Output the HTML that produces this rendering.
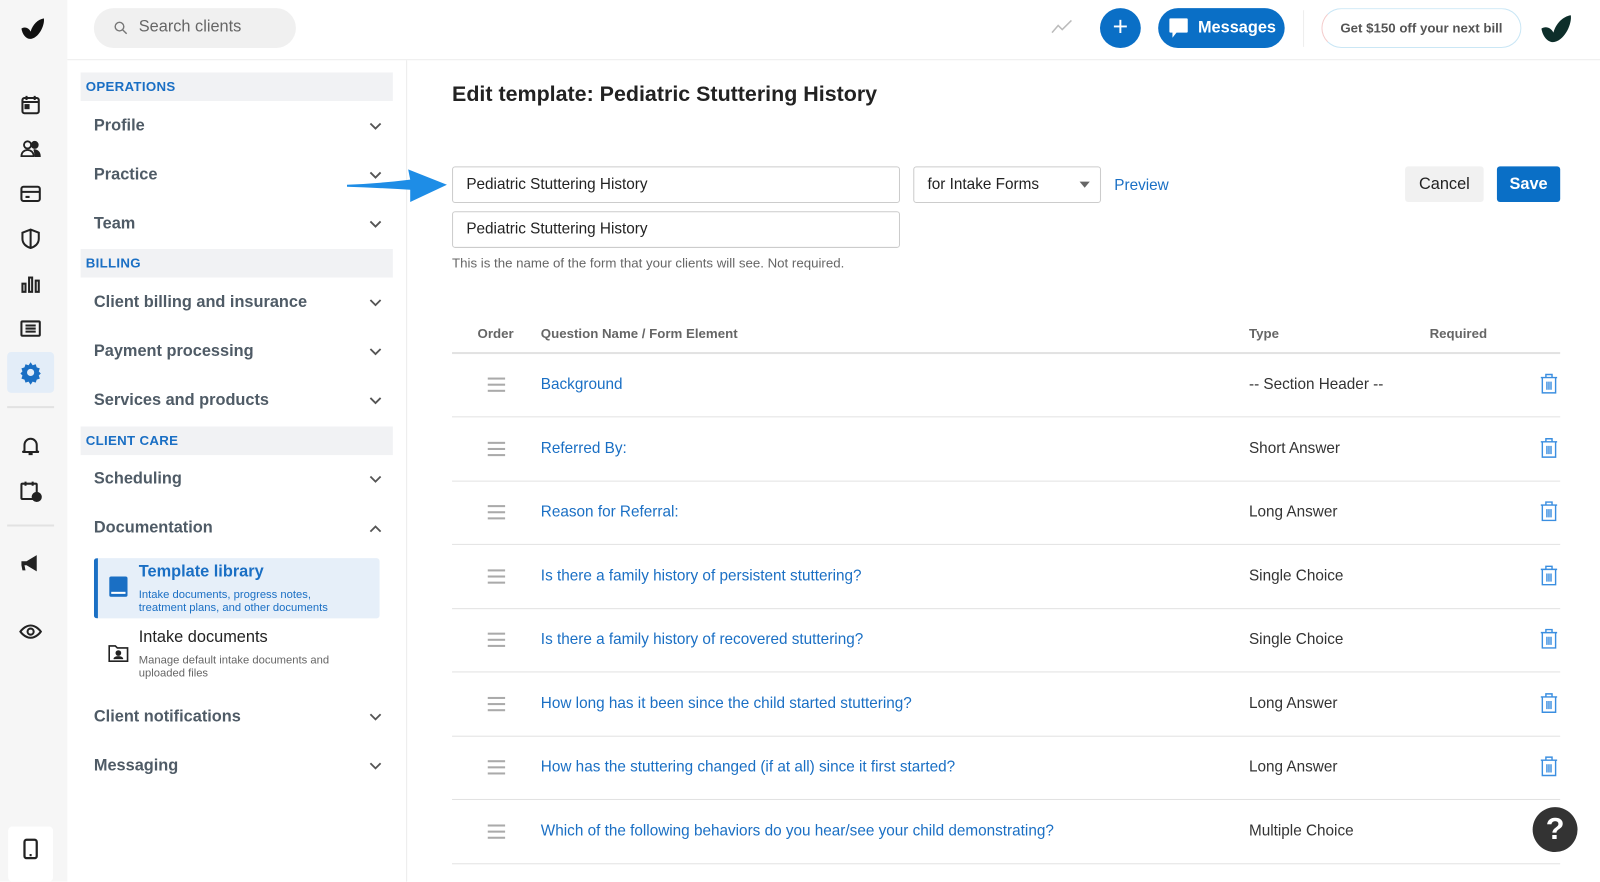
<!DOCTYPE html>
<html><head><meta charset="utf-8"><style>
*{box-sizing:border-box;margin:0;padding:0}
html,body{width:1600px;height:864px;overflow:hidden}
body{font-family:"Liberation Sans",sans-serif;background:#fff;color:#222}
#w{position:absolute;left:0;top:0;width:1568px;height:847px;transform:scale(1.0204);transform-origin:0 0}
.rail{position:absolute;left:0;top:0;width:66px;height:864px;background:#f6f6f6}
.ic{position:absolute;left:18px;width:24px;height:24px}
.top{position:absolute;left:66px;top:0;right:0;height:59px;border-bottom:1px solid #ececec}
.side{position:absolute;left:66px;top:59px;width:333px;height:805px;border-right:1px solid #ececec}
.sec{position:absolute;left:13px;width:306px;height:28px;background:#f1f2f4;color:#1a6fc4;font-weight:bold;font-size:13px;line-height:28px;padding-left:5px;letter-spacing:.3px}
.it{position:absolute;left:26px;width:283px;font-size:16px;font-weight:bold;color:#4f5b66}
.chev{position:absolute;right:0;top:2px;width:14px;height:14px}
.abs{position:absolute}
.row{position:absolute;left:443px;width:1086px;height:63px;border-bottom:1px solid #e2e2e2}
.row .q{position:absolute;left:87px;top:22px;font-size:15px;color:#1a6fc4}
.row .t{position:absolute;left:781px;top:22px;font-size:15px;color:#333}
.row .h{position:absolute;left:35px;top:24px;width:17px;height:14px;border-top:2px solid #aaa;border-bottom:2px solid #aaa}
.row .h:after{content:"";position:absolute;left:0;right:0;top:4px;border-top:2px solid #aaa}
.row svg{position:absolute;left:1066px;top:20px}
</style></head><body><div id="w">
<div class="rail">
<svg class="abs" style="left:19px;top:16px" width="26" height="24" viewBox="0 0 26 24"><path d="M2 12c3-2 7-1 9 3 2-7 7-12 13-13 1 6-4 18-12 20C7 23 3 18 2 12z" fill="#111"/></svg>
<svg class="ic" style="top:91px" viewBox="0 0 24 24" fill="none" stroke="#222" stroke-width="2"><rect x="4" y="5" width="16" height="15" rx="2"/><path d="M8 3v4M16 3v4M4 9h16"/><rect x="7" y="12" width="3" height="3" fill="#222"/></svg>
<svg class="ic" style="top:134px" viewBox="0 0 24 24" fill="none" stroke="#222" stroke-width="1.8"><circle cx="9" cy="8" r="3.5"/><path d="M3 19c0-4 3-6 6-6s6 2 6 6z"/><circle cx="16" cy="8" r="3" fill="#222"/><path d="M15 13c3 0 6 2 6 6h-5" fill="#222"/></svg>
<svg class="ic" style="top:178px" viewBox="0 0 24 24" fill="none" stroke="#222" stroke-width="2"><rect x="3" y="5" width="18" height="14" rx="2"/><path d="M3 10h18M7 15h4"/></svg>
<svg class="ic" style="top:222px" viewBox="0 0 24 24" fill="none" stroke="#222" stroke-width="2"><path d="M12 3l8 3v6c0 5-4 8-8 9-4-1-8-4-8-9V6z M12 3v18"/></svg>
<svg class="ic" style="top:266px" viewBox="0 0 24 24" fill="none" stroke="#222" stroke-width="2"><rect x="4" y="12" width="3" height="8"/><rect x="10.5" y="6" width="3" height="14"/><rect x="17" y="9" width="3" height="11"/></svg>
<svg class="ic" style="top:310px" viewBox="0 0 24 24" fill="none" stroke="#222" stroke-width="2"><rect x="3" y="5" width="18" height="14" rx="1"/><path d="M7 9h10M7 12h10M7 15h10"/></svg>
<div class="abs" style="left:7px;top:345px;width:46px;height:40px;background:#e3edf8;border-radius:4px"></div>
<svg class="ic" style="top:353px" viewBox="0 0 24 24"><path fill="#1a6fc4" d="M12 2l2 3 3-1 1 3 3 1-1 3 2 2-2 2 1 3-3 1-1 3-3-1-2 3-2-3-3 1-1-3-3-1 1-3-2-2 2-2-1-3 3-1 1-3 3 1z"/><circle cx="12" cy="12" r="3.5" fill="#e3edf8"/></svg>
<div class="abs" style="left:7px;top:398px;width:46px;border-top:2px solid #e2e2e2"></div>
<svg class="ic" style="top:425px" viewBox="0 0 24 24" fill="none" stroke="#222" stroke-width="2"><path d="M6 17V11a6 6 0 0112 0v6l2 1H4z M10 20h4"/></svg>
<svg class="ic" style="top:469px" viewBox="0 0 24 24" fill="none" stroke="#222" stroke-width="2"><rect x="3" y="5" width="15" height="15" rx="1"/><path d="M7 3v4M14 3v4"/><circle cx="18" cy="18" r="4" fill="#222"/></svg>
<div class="abs" style="left:7px;top:514px;width:46px;border-top:2px solid #e2e2e2"></div>
<svg class="ic" style="top:540px" viewBox="0 0 24 24"><path fill="#222" d="M3 10h5l10-6v16L8 14H6l1 5H4l-1-5z"/></svg>
<svg class="ic" style="top:607px" viewBox="0 0 24 24" fill="none" stroke="#222" stroke-width="2"><path d="M2 12s4-6 10-6 10 6 10 6-4 6-10 6S2 12 2 12z"/><circle cx="12" cy="12" r="3"/></svg>
<div class="abs" style="left:8px;top:810px;width:44px;height:54px;background:#fff;border-radius:4px"></div>
<svg class="ic" style="top:820px" viewBox="0 0 24 24" fill="none" stroke="#222" stroke-width="2.2"><rect x="6" y="3" width="12" height="18" rx="2"/><path d="M11 18h2"/></svg>
</div>

<div class="top">
<div class="abs" style="left:26px;top:8px;width:198px;height:39px;border-radius:20px;background:#f0f0f0"></div>
<svg class="abs" style="left:45px;top:20px" width="15" height="15" viewBox="0 0 16 16" fill="none" stroke="#777" stroke-width="1.5"><circle cx="6.5" cy="6.5" r="4.5"/><path d="M10 10l4 4"/></svg>
<div class="abs" style="left:70px;top:18px;font-size:16px;color:#666">Search clients</div>
<svg class="abs" style="left:964px;top:18px" width="22" height="16" viewBox="0 0 22 16" fill="none" stroke="#bbb" stroke-width="1.5"><path d="M1 14l6-7 4 4 9-9"/></svg>
<div class="abs" style="left:1012px;top:8px;width:40px;height:39px;border-radius:50%;background:#0a6fc6;color:#fff;font-size:26px;text-align:center;line-height:37px">+</div>
<div class="abs" style="left:1069px;top:8px;width:124px;height:39px;border-radius:20px;background:#0a6fc6;color:#fff;font-weight:bold;font-size:16px;line-height:39px;padding-left:39px">Messages</div>
<svg class="abs" style="left:1079px;top:17px" width="20" height="22" viewBox="0 0 20 22"><path fill="#fff" d="M2 1h16a1 1 0 011 1v12a1 1 0 01-1 1H8l-4 5v-5H2a1 1 0 01-1-1V2a1 1 0 011-1z"/></svg>
<div class="abs" style="left:1211px;top:10px;height:36px;border-left:1px solid #eee"></div>
<div class="abs" style="left:1229px;top:8px;width:196px;height:39px;border-radius:20px;border:1px solid #c9e6f5;border-left-color:#f4cccc;font-size:13px;font-weight:bold;color:#555;text-align:center;line-height:37px">Get $150 off your next bill</div>
<svg class="abs" style="left:1442px;top:12px" width="34" height="32" viewBox="0 0 26 24"><path d="M2 12c3-2 7-1 9 3 2-7 7-12 13-13 1 6-4 18-12 20C7 23 3 18 2 12z" fill="#0d2e2a"/></svg>
</div>

<div class="side">
<div class="sec" style="top:12px">OPERATIONS</div>
<div class="it" style="top:56px">Profile<svg class="chev" viewBox="0 0 14 14" fill="none" stroke="#555" stroke-width="1.8"><path d="M2 4l5 5 5-5"/></svg></div>
<div class="it" style="top:104px">Practice<svg class="chev" viewBox="0 0 14 14" fill="none" stroke="#555" stroke-width="1.8"><path d="M2 4l5 5 5-5"/></svg></div>
<div class="it" style="top:152px">Team<svg class="chev" viewBox="0 0 14 14" fill="none" stroke="#555" stroke-width="1.8"><path d="M2 4l5 5 5-5"/></svg></div>
<div class="sec" style="top:185px">BILLING</div>
<div class="it" style="top:229px">Client billing and insurance<svg class="chev" viewBox="0 0 14 14" fill="none" stroke="#555" stroke-width="1.8"><path d="M2 4l5 5 5-5"/></svg></div>
<div class="it" style="top:277px">Payment processing<svg class="chev" viewBox="0 0 14 14" fill="none" stroke="#555" stroke-width="1.8"><path d="M2 4l5 5 5-5"/></svg></div>
<div class="it" style="top:325px">Services and products<svg class="chev" viewBox="0 0 14 14" fill="none" stroke="#555" stroke-width="1.8"><path d="M2 4l5 5 5-5"/></svg></div>
<div class="sec" style="top:359px">CLIENT CARE</div>
<div class="it" style="top:402px">Scheduling<svg class="chev" viewBox="0 0 14 14" fill="none" stroke="#555" stroke-width="1.8"><path d="M2 4l5 5 5-5"/></svg></div>
<div class="it" style="top:450px">Documentation<svg class="chev" viewBox="0 0 14 14" fill="none" stroke="#555" stroke-width="1.8"><path d="M2 10l5-5 5 5"/></svg></div>
<div class="abs" style="left:26px;top:488px;width:280px;height:59px;background:#e6eff9;border-left:4px solid #1a6fc4;border-radius:3px"></div>
<svg class="abs" style="left:41px;top:506px" width="18" height="20" viewBox="0 0 18 20"><rect x="0" y="0" width="18" height="20" rx="2" fill="#1a6fc4"/><rect x="2" y="15" width="14" height="2" fill="#fff"/></svg>
<div class="abs" style="left:70px;top:493px;font-size:16px;font-weight:bold;color:#1a6fc4">Template library</div>
<div class="abs" style="left:70px;top:518px;font-size:11px;color:#1a6fc4;line-height:13px">Intake documents, progress notes,<br>treatment plans, and other documents</div>
<svg class="abs" style="left:40px;top:572px" width="20" height="18" viewBox="0 0 20 18" fill="none" stroke="#222" stroke-width="1.6"><path d="M1 2h6l2 2h10v13H1z"/><circle cx="10" cy="9" r="2" fill="#222"/><path d="M6 15c0-3 8-3 8 0" fill="#222"/></svg>
<div class="abs" style="left:70px;top:557px;font-size:16px;color:#222">Intake documents</div>
<div class="abs" style="left:70px;top:582px;font-size:11px;color:#666;line-height:13px">Manage default intake documents and<br>uploaded files</div>
<div class="it" style="top:635px">Client notifications<svg class="chev" viewBox="0 0 14 14" fill="none" stroke="#555" stroke-width="1.8"><path d="M2 4l5 5 5-5"/></svg></div>
<div class="it" style="top:683px">Messaging<svg class="chev" viewBox="0 0 14 14" fill="none" stroke="#555" stroke-width="1.8"><path d="M2 4l5 5 5-5"/></svg></div>
</div>

<svg class="abs" style="left:340px;top:162px" width="100" height="38" viewBox="0 0 100 38"><path d="M0 19 Q30 18 62 14 L60 4 L98 19 L62 36 L62 24 Q30 22 0 21z" fill="#1e8de6"/></svg>

<div class="abs" style="left:443px;top:81px;font-size:21px;font-weight:bold;color:#222">Edit template: Pediatric Stuttering History</div>
<div class="abs" style="left:443px;top:163px;width:439px;height:36px;border:1px solid #ccc;border-radius:3px;font-size:15px;line-height:34px;padding-left:13px">Pediatric Stuttering History</div>
<div class="abs" style="left:895px;top:163px;width:184px;height:36px;border:1px solid #ccc;border-radius:3px;font-size:15px;line-height:34px;padding-left:13px">for Intake Forms</div>
<div class="abs" style="left:1058px;top:178px;border:5px solid transparent;border-top:6px solid #666"></div>
<div class="abs" style="left:1092px;top:173px;font-size:15px;color:#1a6fc4">Preview</div>
<div class="abs" style="left:1377px;top:163px;width:77px;height:35px;background:#f1f1f1;border-radius:3px;font-size:16px;text-align:center;line-height:35px;color:#222">Cancel</div>
<div class="abs" style="left:1467px;top:163px;width:62px;height:35px;background:#0a6fc6;border-radius:3px;font-size:16px;font-weight:bold;text-align:center;line-height:35px;color:#fff">Save</div>
<div class="abs" style="left:443px;top:207px;width:439px;height:36px;border:1px solid #ccc;border-radius:3px;font-size:15px;line-height:34px;padding-left:13px">Pediatric Stuttering History</div>
<div class="abs" style="left:443px;top:250px;font-size:13px;color:#666">This is the name of the form that your clients will see. Not required.</div>

<div class="abs" style="left:468px;top:319px;font-size:13px;font-weight:bold;color:#666">Order</div>
<div class="abs" style="left:530px;top:319px;font-size:13px;font-weight:bold;color:#666">Question Name / Form Element</div>
<div class="abs" style="left:1224px;top:319px;font-size:13px;font-weight:bold;color:#666">Type</div>
<div class="abs" style="left:1401px;top:319px;font-size:13px;font-weight:bold;color:#666">Required</div>
<div class="abs" style="left:443px;top:345px;width:1086px;border-top:2px solid #e2e2e2"></div>

<div class="row" style="top:346px"><div class="h"></div><div class="q">Background</div><div class="t">-- Section Header --</div><svg width="18" height="20" viewBox="0 0 18 20" fill="none" stroke="#3a8ee0" stroke-width="1.4"><path d="M1 4h16M6 4V1h6v3M2.5 4v15h13V4M7 8v8M9 8v8M11 8v8"/></svg></div>
<div class="row" style="top:409px"><div class="h"></div><div class="q">Referred By:</div><div class="t">Short Answer</div><svg width="18" height="20" viewBox="0 0 18 20" fill="none" stroke="#3a8ee0" stroke-width="1.4"><path d="M1 4h16M6 4V1h6v3M2.5 4v15h13V4M7 8v8M9 8v8M11 8v8"/></svg></div>
<div class="row" style="top:471px"><div class="h"></div><div class="q">Reason for Referral:</div><div class="t">Long Answer</div><svg width="18" height="20" viewBox="0 0 18 20" fill="none" stroke="#3a8ee0" stroke-width="1.4"><path d="M1 4h16M6 4V1h6v3M2.5 4v15h13V4M7 8v8M9 8v8M11 8v8"/></svg></div>
<div class="row" style="top:534px"><div class="h"></div><div class="q">Is there a family history of persistent stuttering?</div><div class="t">Single Choice</div><svg width="18" height="20" viewBox="0 0 18 20" fill="none" stroke="#3a8ee0" stroke-width="1.4"><path d="M1 4h16M6 4V1h6v3M2.5 4v15h13V4M7 8v8M9 8v8M11 8v8"/></svg></div>
<div class="row" style="top:596px"><div class="h"></div><div class="q">Is there a family history of recovered stuttering?</div><div class="t">Single Choice</div><svg width="18" height="20" viewBox="0 0 18 20" fill="none" stroke="#3a8ee0" stroke-width="1.4"><path d="M1 4h16M6 4V1h6v3M2.5 4v15h13V4M7 8v8M9 8v8M11 8v8"/></svg></div>
<div class="row" style="top:659px"><div class="h"></div><div class="q">How long has it been since the child started stuttering?</div><div class="t">Long Answer</div><svg width="18" height="20" viewBox="0 0 18 20" fill="none" stroke="#3a8ee0" stroke-width="1.4"><path d="M1 4h16M6 4V1h6v3M2.5 4v15h13V4M7 8v8M9 8v8M11 8v8"/></svg></div>
<div class="row" style="top:721px"><div class="h"></div><div class="q">How has the stuttering changed (if at all) since it first started?</div><div class="t">Long Answer</div><svg width="18" height="20" viewBox="0 0 18 20" fill="none" stroke="#3a8ee0" stroke-width="1.4"><path d="M1 4h16M6 4V1h6v3M2.5 4v15h13V4M7 8v8M9 8v8M11 8v8"/></svg></div>
<div class="row" style="top:784px"><div class="h"></div><div class="q">Which of the following behaviors do you hear/see your child demonstrating?</div><div class="t">Multiple Choice</div></div>

<div class="abs" style="left:1502px;top:791px;width:44px;height:44px;border-radius:50%;background:#333;color:#fff;font-size:30px;font-weight:bold;text-align:center;line-height:44px">?</div>
</div></body></html>
